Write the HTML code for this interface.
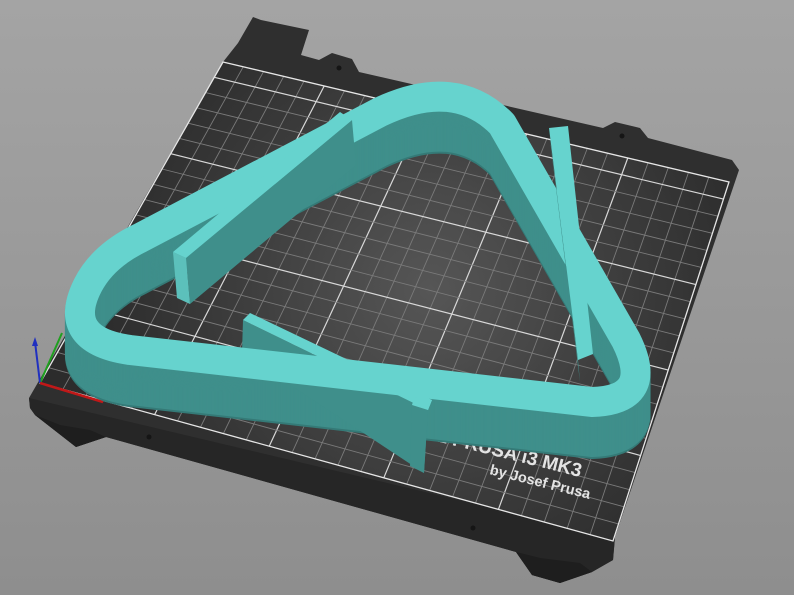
<!DOCTYPE html>
<html><head><meta charset="utf-8"><style>
html,body{margin:0;padding:0;width:794px;height:595px;overflow:hidden;background:#9c9c9c}
svg{display:block}
</style></head><body>
<svg id="s" width="794" height="595" viewBox="0 0 794 595" xmlns="http://www.w3.org/2000/svg">
<defs>
<linearGradient id="bg" x1="0" y1="0" x2="0" y2="1"><stop offset="0" stop-color="#a4a4a4"/><stop offset="1" stop-color="#8e8e8e"/></linearGradient>
<radialGradient id="bed" cx="430" cy="290" r="330" gradientUnits="userSpaceOnUse"><stop offset="0" stop-color="#565656"/><stop offset="0.6" stop-color="#3c3c3c"/><stop offset="1" stop-color="#2c2c2c"/></radialGradient>
<path id="tri" d="M140,238 L380,112 Q455,76 502,124 L626,340 Q656,400 592,402 L130,350 Q60,340 88,285 Q103,256 140,238 Z" fill="none" stroke-width="30" stroke-linejoin="round"/>
</defs>
<rect width="794" height="595" fill="url(#bg)"/>
<polygon fill="#2f2f2f" points="253,17 261,20 309,30 301,55 319,60 332,53 352,59 359,72 603,128 615,122 640,128 648,138 732,160 739,170 615,537 613,560 592,572 560,583 532,575 516,552 106,437 76,447 35,415 30,408 29,398 223,62 238,43"/>
<polygon fill="#262626" points="29,398 615,537 613,560 592,572 560,583 532,575 516,552 106,437 76,447 35,415 30,408"/>
<polygon fill="#1e1e1e" points="35,415 76,447 106,437 90,430 60,425"/>
<polygon fill="#1e1e1e" points="516,552 532,575 560,583 592,572 580,563 540,558"/>
<circle cx="149" cy="437" r="2.5" fill="#151515"/><circle cx="473" cy="528" r="2.5" fill="#151515"/>
<circle cx="339" cy="68" r="2.5" fill="#151515"/><circle cx="622" cy="136" r="2.5" fill="#151515"/>
<polygon fill="url(#bed)" points="223,62 729,182 613,541 40,383"/>
<g id="grid"></g>
<polygon fill="none" stroke="#e6e6e6" stroke-width="1.3" points="223,62 729,182 613,541 40,383"/>
<text x="0" y="0" transform="translate(580,477) rotate(14)" text-anchor="end" font-family="Liberation Sans, sans-serif" font-size="19" font-weight="bold" fill="#e4e4e4">ORIGINAL PRUSA i3 MK3</text>
<text x="0" y="0" transform="translate(489,474) rotate(14)" font-family="Liberation Sans, sans-serif" font-size="14.5" font-weight="bold" fill="#e4e4e4">by Josef Prusa</text>
<line x1="40" y1="383" x2="62" y2="333" stroke="#1fa01f" stroke-width="2"/>
<line x1="40" y1="383" x2="35" y2="342" stroke="#2030c0" stroke-width="2"/>
<polygon points="35,337 32,346 38,346" fill="#2030c0"/>
<line x1="40" y1="383" x2="103" y2="402" stroke="#c01818" stroke-width="2.5"/>
<g id="walls"></g>
<polygon fill="#3f8f8b" points="243,320 428,410 424,473 242,353"/>
<polygon fill="#66d3ce" points="243,320 250,313 432,400 428,410"/>
<use href="#tri" stroke="#66d3ce"/>
<polygon fill="#3f8f8b" points="186,258 352,120 356,165 190,304"/>
<polygon fill="#5cc0bb" points="173,252 186,258 190,304 177,298"/>
<polygon fill="#66d3ce" points="173,252 340,112 352,120 186,258"/>
<polygon fill="#3f8f8b" points="412,403 428,410 424,473 410,466"/>
<polygon fill="#66d3ce" points="414,398 432,400 428,410 412,405"/>
<polygon fill="#3f8f8b" points="549,130 578,360 580,382 551,148"/>
<polygon fill="#66d3ce" points="549,128 568,126 593,354 578,360"/>
</svg>
<script>
(function(){
var NS="http://www.w3.org/2000/svg";
var BL=[40,383],BR=[613,541],TL=[223,62],TR=[729,182];
function P(u,v){var bx=BL[0]+(BR[0]-BL[0])*u,by=BL[1]+(BR[1]-BL[1])*u,tx=TL[0]+(TR[0]-TL[0])*u,ty=TL[1]+(TR[1]-TL[1])*u;return[bx+(tx-bx)*v,by+(ty-by)*v];}
var g=document.getElementById("grid");
function L(a,b,maj){var l=document.createElementNS(NS,"line");l.setAttribute("x1",a[0]);l.setAttribute("y1",a[1]);l.setAttribute("x2",b[0]);l.setAttribute("y2",b[1]);l.setAttribute("stroke",maj?"#d8d8d8":"#7a7a7a");l.setAttribute("stroke-width",maj?"1.2":"0.9");g.appendChild(l);}
for(var i=1;i<25;i++){L(P(i/25,0),P(i/25,1),i%5==0);}
for(var j=1;j<21;j++){L(P(0,j/21),P(1,j/21),j%5==0);}
var w=document.getElementById("walls");
for(var d=42;d>=1;d--){var u=document.createElementNS(NS,"use");u.setAttribute("href","#tri");u.setAttribute("stroke",d>40?"#357a77":"#3f8f8b");u.setAttribute("transform","translate(0,"+d+")");w.appendChild(u);}
})();
</script>
</body></html>
